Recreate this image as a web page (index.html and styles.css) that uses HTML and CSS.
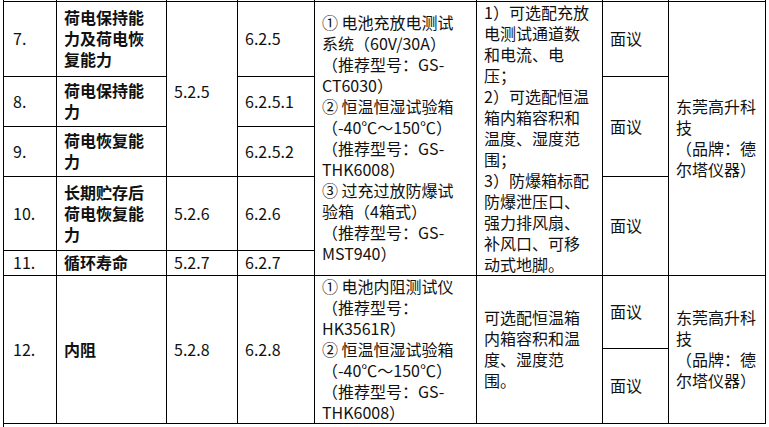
FILE: index.html
```html
<!DOCTYPE html>
<html lang="zh-CN">
<head>
<meta charset="utf-8">
<title>检测项目表</title>
<link rel="stylesheet" href="styles.css">
</head>
<body>
<div class="sheet">
<table class="spec">
  <colgroup>
    <col class="c-num">
    <col class="c-name">
    <col class="c-std">
    <col class="c-method">
    <col class="c-equip">
    <col class="c-opt">
    <col class="c-price">
    <col class="c-brand">
  </colgroup>
  <tbody>
    <tr class="r-prev">
      <td></td><td></td><td></td><td></td><td></td><td></td><td></td><td></td>
    </tr>
    <tr class="r7">
      <td class="num">7.</td>
      <td class="name">荷电保持能力及荷电恢复能力</td>
      <td rowspan="3" class="std">5.2.5</td>
      <td>6.2.5</td>
      <td rowspan="5" class="equip">① 电池充放电测试<br>系统（60V/30A）<br>（推荐型号：GS-<br>CT6030）<br>② 恒温恒湿试验箱<br>（-40℃～150℃）<br>（推荐型号：GS-<br>THK6008）<br>③ 过充过放防爆试<br>验箱（4箱式）<br>（推荐型号：GS-<br>MST940）</td>
      <td rowspan="5" class="opt">1）可选配充放电测试通道数和电流、电压；<br>2）可选配恒温箱内箱容积和温度、湿度范围；<br>3）防爆箱标配防爆泄压口、强力排风扇、补风口、可移动式地脚。</td>
      <td>面议</td>
      <td rowspan="5" class="brand">东莞高升科技<br>（品牌：德尔塔仪器）</td>
    </tr>
    <tr class="r8">
      <td class="num">8.</td>
      <td class="name">荷电保持能力</td>
      <td>6.2.5.1</td>
      <td rowspan="2">面议</td>
    </tr>
    <tr class="r9">
      <td class="num">9.</td>
      <td class="name">荷电恢复能力</td>
      <td>6.2.5.2</td>
    </tr>
    <tr class="r10">
      <td class="num">10.</td>
      <td class="name">长期贮存后荷电恢复能力</td>
      <td>5.2.6</td>
      <td>6.2.6</td>
      <td rowspan="2">面议</td>
    </tr>
    <tr class="r11">
      <td class="num">11.</td>
      <td class="name">循环寿命</td>
      <td>5.2.7</td>
      <td>6.2.7</td>
    </tr>
    <tr class="r12a">
      <td rowspan="2" class="num">12.</td>
      <td rowspan="2" class="name">内阻</td>
      <td rowspan="2">5.2.8</td>
      <td rowspan="2">6.2.8</td>
      <td rowspan="2" class="equip">① 电池内阻测试仪<br>（推荐型号：<br>HK3561R）<br>② 恒温恒湿试验箱<br>（-40℃～150℃）<br>（推荐型号：GS-<br>THK6008）</td>
      <td rowspan="2" class="opt">可选配恒温箱内箱容积和温度、湿度范围。</td>
      <td>面议</td>
      <td rowspan="2" class="brand">东莞高升科技<br>（品牌：德尔塔仪器）</td>
    </tr>
    <tr class="r12b">
      <td>面议</td>
    </tr>
    <tr class="r-next">
      <td colspan="8" class="tail"></td>
    </tr>
  </tbody>
</table>
</div>
</body>
</html>
```
FILE: styles.css
```css
html, body {
  margin: 0;
  padding: 0;
  background: #ffffff;
}

body {
  font-family: "Noto Sans CJK SC", "Microsoft YaHei", sans-serif;
  font-size: 16px;
  color: #111111;
  overflow: hidden;
}

.sheet {
  padding-left: 3px;
}

.spec {
  border-collapse: collapse;
  table-layout: fixed;
  width: 763px;
}

.c-num { width: 53px; }
.c-name { width: 110px; }
.c-std { width: 71px; }
.c-method { width: 77px; }
.c-equip { width: 162px; }
.c-opt { width: 126px; }
.c-price { width: 66px; }
.c-brand { width: 97px; }

.spec td {
  border: 1px solid #000000;
  padding: 0 7px;
  line-height: 21px;
  vertical-align: middle;
  text-align: left;
  word-break: normal;
}

.spec td.num {
  padding-left: 9px;
}

.spec td.name {
  font-weight: 700;
}

.spec td.std {
  padding-top: 6px;
}

.r-prev { height: 1px; }
.r-prev td {
  border-top: none;
  padding: 0;
  line-height: 0;
}

.r7 { height: 75px; }
.r8 { height: 50px; }
.r9 { height: 50px; }
.r10 { height: 74px; }
.r11 { height: 25px; }
.r12a { height: 73px; }
.r12b { height: 75px; }

.r-next { height: 40px; }
.spec td.tail {
  border-right-color: transparent;
  border-bottom: none;
}
```
